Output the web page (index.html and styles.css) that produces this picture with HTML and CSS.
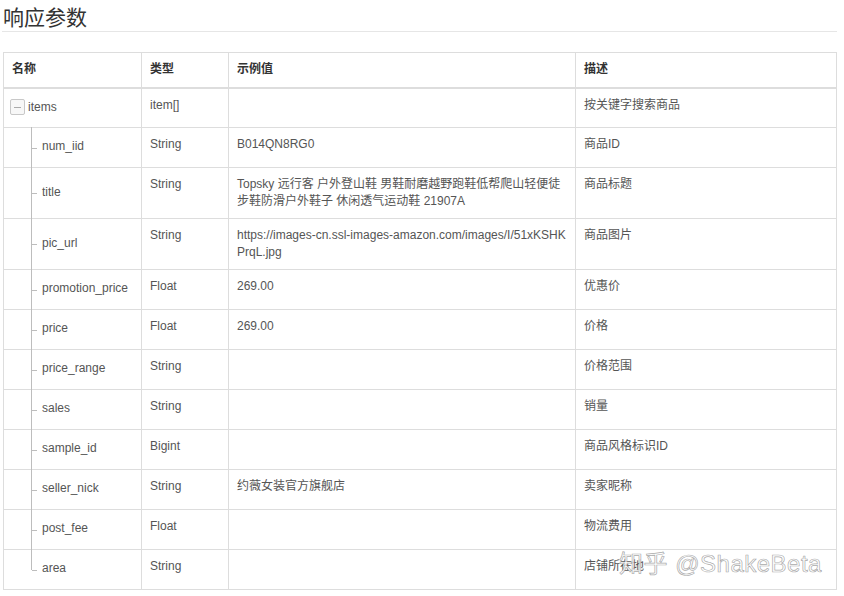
FILE: index.html
```html
<!DOCTYPE html>
<html lang="zh-CN">
<head>
<meta charset="utf-8">
<title>响应参数</title>
<link rel="stylesheet" href="styles.css">
</head>
<body>
<div class="page">
  <h2 class="title">响应参数</h2>
  <table class="params">
    <colgroup>
      <col class="c-name"><col class="c-type"><col class="c-ex"><col class="c-desc">
    </colgroup>
    <thead>
      <tr><th>名称</th><th>类型</th><th>示例值</th><th>描述</th></tr>
    </thead>
    <tbody>
      <tr>
        <td class="name root"><span class="toggle"></span>items</td>
        <td>item[]</td><td></td><td>按关键字搜索商品</td>
      </tr>
      <tr><td class="name child">num_iid</td><td>String</td><td>B014QN8RG0</td><td>商品ID</td></tr>
      <tr><td class="name child">title</td><td>String</td><td>Topsky 远行客 户外登山鞋 男鞋耐磨越野跑鞋低帮爬山轻便徒<br>步鞋防滑户外鞋子 休闲透气运动鞋 21907A</td><td>商品标题</td></tr>
      <tr><td class="name child">pic_url</td><td>String</td><td>https://images-cn.ssl-images-amazon.com/images/I/51xKSHK<br>PrqL.jpg</td><td>商品图片</td></tr>
      <tr><td class="name child">promotion_price</td><td>Float</td><td>269.00</td><td>优惠价</td></tr>
      <tr><td class="name child">price</td><td>Float</td><td>269.00</td><td>价格</td></tr>
      <tr><td class="name child">price_range</td><td>String</td><td></td><td>价格范围</td></tr>
      <tr><td class="name child">sales</td><td>String</td><td></td><td>销量</td></tr>
      <tr><td class="name child">sample_id</td><td>Bigint</td><td></td><td>商品风格标识ID</td></tr>
      <tr><td class="name child">seller_nick</td><td>String</td><td>约薇女装官方旗舰店</td><td>卖家昵称</td></tr>
      <tr><td class="name child">post_fee</td><td>Float</td><td></td><td>物流费用</td></tr>
      <tr><td class="name child last">area</td><td>String</td><td></td><td>店铺所在地</td></tr>
    </tbody>
  </table>
  <div class="watermark">知乎 @ShakeBeta</div>
</div>
</body>
</html>
```

FILE: styles.css
```css
* { box-sizing: border-box; }
html, body { margin: 0; padding: 0; background: #fff; }
body {
  font-family: "Liberation Sans", Arial, "Noto Sans CJK SC", sans-serif;
  font-size: 12px;
  color: #555;
}
.page {
  position: relative;
  width: 844px;
  height: 596px;
  padding: 0 8px 0 3px;
}
.title {
  margin: 0 -1px 0 -1px;
  padding: 2px 0 0 1px;
  height: 32px;
  font-size: 21px;
  line-height: 28px;
  font-weight: normal;
  color: #333;
  border-bottom: 1px solid #e6e6e6;
  font-family: "Noto Sans CJK SC", sans-serif;
}
.params {
  margin-top: 20px;
  width: 833px;
  border-collapse: collapse;
  table-layout: fixed;
  border: 1px solid #ddd;
}
.c-name { width: 138px; }
.c-type { width: 87px; }
.c-ex { width: 347px; }
.c-desc { width: 261px; }
.params th, .params td {
  border: 1px solid #ddd;
  padding: 8px 8px 8px;
  line-height: 17px;
  text-align: left;
  vertical-align: top;
  word-break: break-all;
  font-family: "Liberation Sans", Arial, "Noto Sans CJK SC", sans-serif;
}
.params th {
  font-weight: bold;
  color: #333;
  height: 35px;
  padding: 8px 8px 7px;
  border-bottom: 2px solid #ddd;
}
.params td { height: 40px; }
.params td.name {
  vertical-align: middle;
  position: relative;
  padding: 7px 4px 9px 38px;
}
.params td.root { padding-left: 23px; padding-top: 9px; }
.toggle {
  display: inline-block;
  width: 15px;
  height: 16px;
  border: 1px solid #c8c8c8;
  border-radius: 2px;
  background: #f7f7f7;
  vertical-align: middle;
  margin: -3px 3px 0 -17px;
  position: relative;
}
.toggle::after {
  content: "";
  position: absolute;
  left: 3px;
  right: 3px;
  top: 7px;
  height: 1px;
  background: #aaa;
}
.child::before {
  content: "";
  position: absolute;
  left: 27px;
  top: -1px;
  bottom: -1px;
  width: 1px;
  background: #bdbdbd;
}
.child::after {
  content: "";
  position: absolute;
  left: 28px;
  top: 50%;
  width: 5px;
  height: 1px;
  background: #bdbdbd;
}
.child.last::before { bottom: auto; height: calc(50% + 1px); }
.watermark {
  position: absolute;
  left: 619px;
  top: 549px;
  font-size: 24px;
  line-height: 30px;
  color: rgba(255, 255, 255, 0.85);
  -webkit-text-stroke: 0.7px rgba(140, 140, 140, 0.75);
  font-family: "Liberation Sans", "Noto Sans CJK SC", sans-serif;
  letter-spacing: 0.5px;
  white-space: nowrap;
}
```
